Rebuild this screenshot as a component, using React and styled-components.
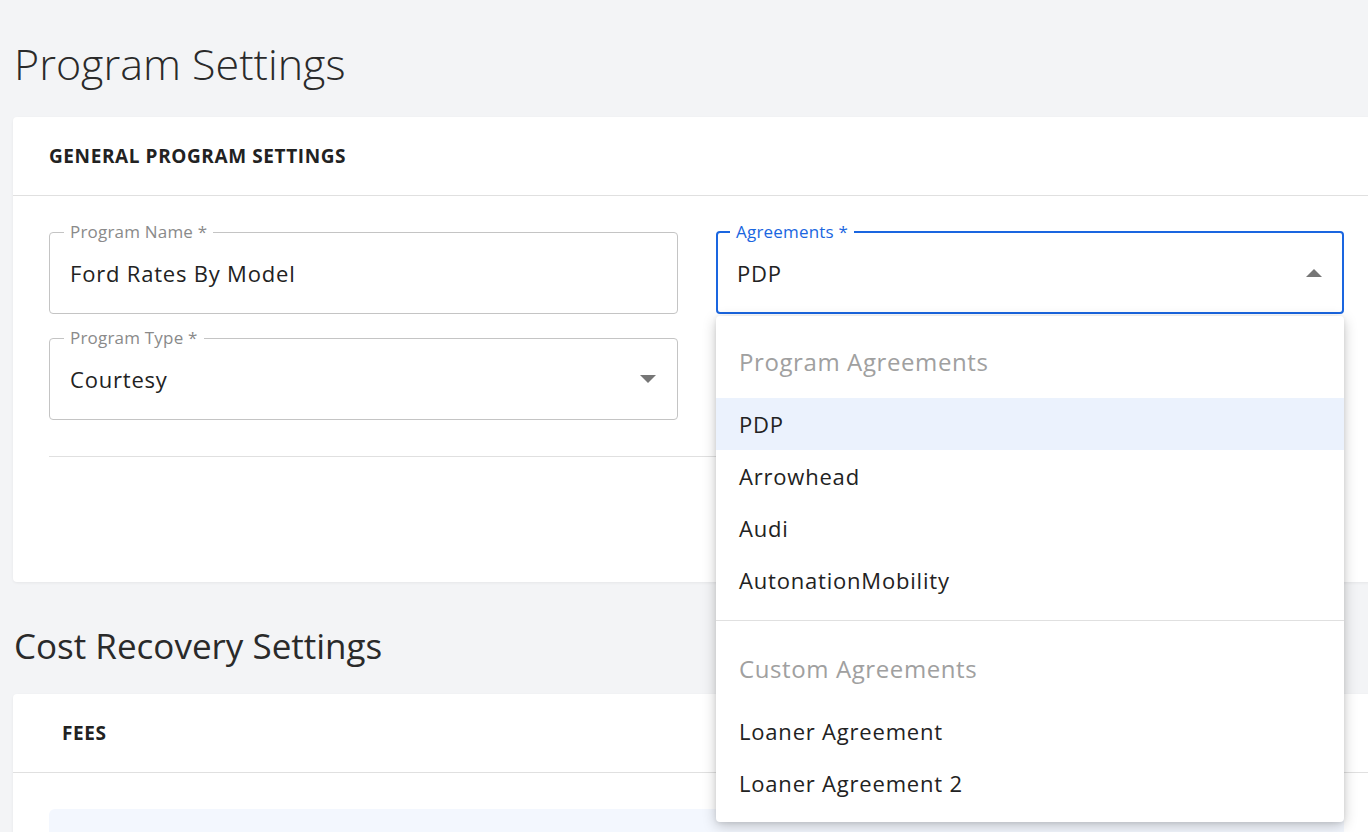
import React from 'react';
import styled, { createGlobalStyle } from 'styled-components';

const colors = {
  page: '#f3f4f6',
  text: '#222222',
  muted: '#8a8a8a',
  border: '#c4c4c4',
  divider: '#e0e0e0',
  focus: '#1a66e0',
  hover: '#ebf2fd',
  tint: '#f3f7fe',
};

const GlobalStyle = createGlobalStyle`
  html, body {
    margin: 0;
    padding: 0;
    overflow: hidden;
    background: ${colors.page};
    font-family: "Open Sans", "Noto Sans", sans-serif;
    color: ${colors.text};
  }
  * { box-sizing: border-box; }
`;

const programAgreements = ['PDP', 'Arrowhead', 'Audi', 'AutonationMobility'];
const customAgreements = ['Loaner Agreement', 'Loaner Agreement 2'];

function TriangleIcon({ up }) {
  return (
    <Caret width="18" height="10" viewBox="0 0 18 10">
      <path d={up ? 'M1 9 L9 1 L17 9 Z' : 'M1 1 L9 9 L17 1 Z'} fill="#767676" />
    </Caret>
  );
}

function OutlinedField({ label, value, focused, select, children }) {
  return (
    <FieldWrap>
      <Outline $focused={focused}>
        <Legend $focused={focused}>{label}</Legend>
      </Outline>
      <FieldValue>{value}</FieldValue>
      {select && <TriangleIcon up={focused} />}
      {children}
    </FieldWrap>
  );
}

export default function App() {
  return (
    <>
      <GlobalStyle />
      <Page>
        <PageTitle>Program Settings</PageTitle>
        <Card>
          <CardHeader>General Program Settings</CardHeader>
          <CardBody>
            <FieldGrid>
              <OutlinedField label="Program Name *" value="Ford Rates By Model" />
              <OutlinedField label="Agreements *" value="PDP" focused select>
                <Menu>
                  <MenuGroupLabel>Program Agreements</MenuGroupLabel>
                  {programAgreements.map((name, i) => (
                    <MenuItem key={name} $active={i === 0}>{name}</MenuItem>
                  ))}
                  <MenuDivider />
                  <MenuGroupLabel>Custom Agreements</MenuGroupLabel>
                  {customAgreements.map((name) => (
                    <MenuItem key={name}>{name}</MenuItem>
                  ))}
                </Menu>
              </OutlinedField>
              <OutlinedField label="Program Type *" value="Courtesy" select />
            </FieldGrid>
            <BodyDivider />
          </CardBody>
        </Card>

        <SectionTitle>Cost Recovery Settings</SectionTitle>
        <Card>
          <CardHeader $wide>Fees</CardHeader>
          <CardBody>
            <TintBox />
          </CardBody>
        </Card>
      </Page>
    </>
  );
}

const Page = styled.div`
  width: 1400px;
  padding: 36px 13px 0 13px;
`;

const PageTitle = styled.h1`
  margin: 0 0 25px 1px;
  font-size: 43px;
  font-weight: 300;
  line-height: 56px;
  color: #2a2a2a;
`;

const SectionTitle = styled.h2`
  margin: 40px 0 24px 1px;
  font-size: 35px;
  font-weight: 400;
  line-height: 48px;
  color: #2a2a2a;
`;

const Card = styled.section`
  width: 1367px;
  background: #fff;
  border-radius: 4px;
  box-shadow: 0 1px 3px rgba(0, 0, 0, 0.06);
`;

const CardHeader = styled.div`
  height: 79px;
  display: flex;
  align-items: center;
  padding: 0 ${(p) => (p.$wide ? '49px' : '36px')};
  border-bottom: 1px solid ${colors.divider};
  font-size: 19px;
  font-weight: 700;
  letter-spacing: 0.6px;
  text-transform: uppercase;
  color: ${colors.text};
`;

const CardBody = styled.div`
  padding: 36px 36px 0 36px;
  min-height: 386px;
`;

const FieldGrid = styled.div`
  display: grid;
  grid-template-columns: 629px 628px;
  column-gap: 38px;
  row-gap: 24px;
`;

const FieldWrap = styled.div`
  position: relative;
  height: 82px;
  display: flex;
  align-items: center;
  padding: 0 21px;
`;

const Outline = styled.fieldset`
  position: absolute;
  inset: -9px 0 0 0;
  margin: 0;
  padding: 0 8px;
  border: ${(p) => (p.$focused ? `2px solid ${colors.focus}` : `1px solid ${colors.border}`)};
  border-radius: 4px;
  pointer-events: none;
`;

const Legend = styled.legend`
  padding: 0 6px 0 6px;
  margin-left: ${(p) => (p.$focused ? '4px' : '6px')};
  font-size: 17px;
  line-height: 18px;
  letter-spacing: 0.2px;
  color: ${(p) => (p.$focused ? colors.focus : colors.muted)};
`;

const FieldValue = styled.div`
  position: relative;
  flex: 1;
  font-size: 22px;
  letter-spacing: 0.8px;
  color: ${colors.text};
`;

const Caret = styled.svg`
  position: relative;
  display: block;
`;

const Menu = styled.div`
  position: absolute;
  top: 84px;
  left: 0;
  width: 100%;
  padding-bottom: 13px;
  background: #fff;
  border-radius: 4px;
  box-shadow: 0 4px 14px rgba(0, 0, 0, 0.22), 0 1px 4px rgba(0, 0, 0, 0.08);
  z-index: 10;
`;

const MenuGroupLabel = styled.div`
  padding: 30px 23px 20px;
  font-size: 24px;
  line-height: 32px;
  letter-spacing: 0.6px;
  color: #a0a0a0;
`;

const MenuItem = styled.div`
  height: 52px;
  display: flex;
  align-items: center;
  padding: 0 23px;
  font-size: 22px;
  letter-spacing: 0.8px;
  color: ${colors.text};
  background: ${(p) => (p.$active ? colors.hover : 'transparent')};
`;

const MenuDivider = styled.div`
  margin: 14px 0 2px;
  border-top: 1px solid ${colors.divider};
`;

const BodyDivider = styled.div`
  margin-top: 36px;
  border-top: 1px solid ${colors.divider};
`;

const TintBox = styled.div`
  height: 120px;
  border-radius: 6px;
  background: ${colors.tint};
`;
